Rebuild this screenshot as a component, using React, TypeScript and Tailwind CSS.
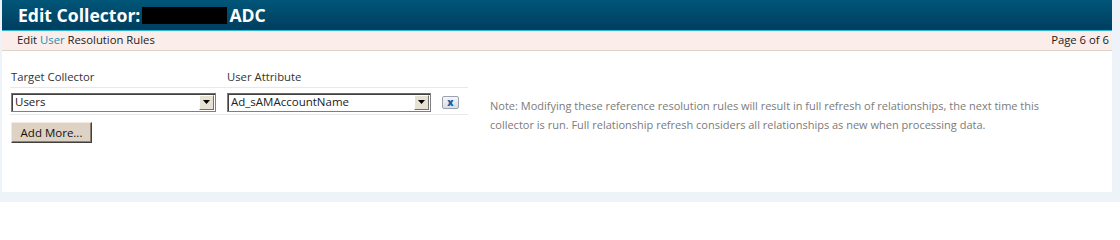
import React from "react";

function SelectBox({ value, width }: { value: string; width: string }) {
  return (
    <div
      className={`flex h-[19px] ${width} items-stretch border border-[#7f7f7f] border-t-[#6b6b6b] bg-white`}
      style={{ boxShadow: "inset 1px 1px 0 #404040" }}
    >
      <div className="flex flex-1 items-center pl-[3px] text-[11.5px] text-[#222]">{value}</div>
      <div className="m-[1px] flex w-[15px] items-center justify-center border border-[#fff] border-r-[#6f6f6f] border-b-[#6f6f6f] bg-[#e6e1d3]">
        <svg width="7" height="4" viewBox="0 0 7 4">
          <path d="M0 0 H7 L3.5 4 Z" fill="#000" />
        </svg>
      </div>
    </div>
  );
}

export default function App() {
  return (
    <div
      className="h-[202px] w-[1120px] bg-[#eef2f9] pl-[2px] pr-[8px]"
      style={{ fontFamily: '"Open Sans", "Noto Sans", sans-serif' }}
    >
      <div className="flex h-[192px] flex-col bg-white">
        <div className="flex h-[30px] items-center bg-gradient-to-b from-[#005679] to-[#003e5f] pl-[16px] text-[17.6px] font-bold text-white">
          <span>Edit Collector:</span>
          <span className="mx-[2px] inline-block h-[17px] w-[85px] bg-black"></span>
          <span>ADC</span>
        </div>
        <div className="h-[1px] bg-[#2fb7cf]"></div>
        <div className="flex h-[20px] items-center justify-between border-b border-[#ddd3c8] bg-[#fbedea] pl-[15px] pr-[3px] text-[11.3px] text-[#222]">
          <span>
            Edit <span className="text-[#1b8db3]">User</span> Resolution Rules
          </span>
          <span>Page 6 of 6</span>
        </div>
        <div className="flex pt-[16px]">
          <div className="ml-[8px] w-[458px]">
            <div className="flex h-[21px] items-center border-b border-[#e8e8e8] text-[11.3px] text-[#333]">
              <span className="ml-[1px] w-[216px]">Target Collector</span>
              <span>User Attribute</span>
            </div>
            <div className="flex h-[27px] items-center border-b border-[#e8e8e8] pt-[2px]">
              <div className="ml-[1px]">
                <SelectBox value="Users" width="w-[205px]" />
              </div>
              <div className="ml-[11px]">
                <SelectBox value="Ad_sAMAccountName" width="w-[204px]" />
              </div>
              <div className="ml-[11px] flex h-[13px] w-[17px] items-center justify-center rounded-[2px] border border-[#9aa3ad] bg-gradient-to-b from-[#f4f6f8] to-[#d9dee5] text-[10px] font-extrabold leading-none text-[#1660a8]">
                x
              </div>
            </div>
            <div className="pt-[4px]">
              <button className="ml-[1px] h-[21px] w-[81px] border border-[#f2eadd] border-r-[#404040] border-b-[#404040] bg-[#ddd2c3] text-[11.5px] text-[#111]" style={{ boxShadow: "inset -1px -1px 0 #8a8073" }}>
                Add More...
              </button>
            </div>
          </div>
          <div className="ml-[22px] pt-[29px] text-[11px] leading-[19px] text-[#7b7b7b]">
            <p>Note: Modifying these reference resolution rules will result in full refresh of relationships, the next time this</p>
            <p>collector is run. Full relationship refresh considers all relationships as new when processing data.</p>
          </div>
        </div>
      </div>
    </div>
  );
}
